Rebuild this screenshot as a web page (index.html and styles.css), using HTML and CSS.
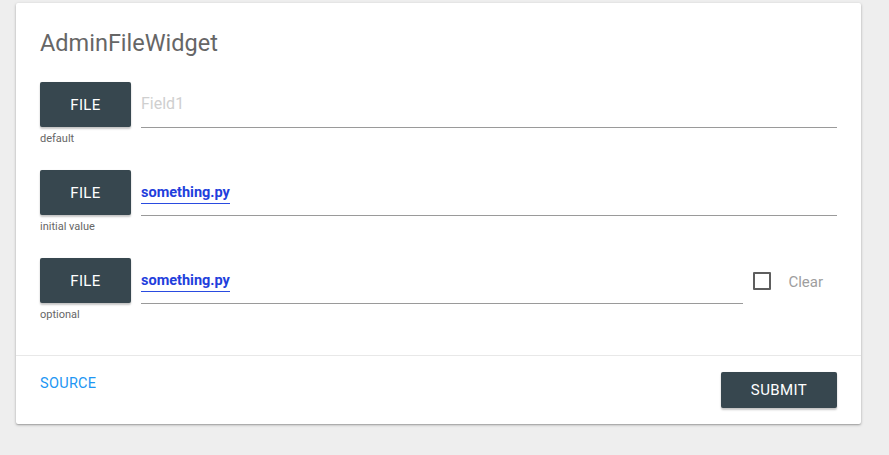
FILE: index.html
```html
<!DOCTYPE html>
<html>
<head>
<meta charset="utf-8">
<link rel="stylesheet" href="styles.css">
</head>
<body>
<div class="card">
  <div class="card-body">
    <h1 class="title">AdminFileWidget</h1>

    <div class="file-row">
      <div class="file-main">
        <button class="btn">FILE</button>
        <div class="field"><span class="placeholder">Field1</span></div>
      </div>
      <div class="helper">default</div>
    </div>

    <div class="file-row">
      <div class="file-main">
        <button class="btn">FILE</button>
        <div class="field"><a class="file-link" href="#">something.py</a></div>
      </div>
      <div class="helper">initial value</div>
    </div>

    <div class="file-row">
      <div class="file-main">
        <button class="btn">FILE</button>
        <div class="field"><a class="file-link" href="#">something.py</a></div>
        <label class="clear">
          <span class="checkbox"></span>
          <span class="clear-text">Clear</span>
        </label>
      </div>
      <div class="helper">optional</div>
    </div>
  </div>
  <div class="card-footer">
    <a class="source" href="#">SOURCE</a>
    <button class="btn btn-submit">SUBMIT</button>
  </div>
</div>
</body>
</html>
```

FILE: styles.css
```css
* { box-sizing: border-box; }
html, body { margin: 0; padding: 0; }
body {
  background: #eeeeee;
  font-family: Roboto, "Liberation Sans", Arial, sans-serif;
  width: 889px;
  height: 455px;
  overflow: hidden;
}
.card {
  margin: 3px 0 0 16px;
  width: 845px;
  height: 421px;
  background: #fff;
  border-radius: 2px;
  box-shadow: 0 1px 3px rgba(0,0,0,0.28), 0 1px 1px rgba(0,0,0,0.12);
  display: flex;
  flex-direction: column;
}
.card-body {
  padding: 24px 24px 0 24px;
  height: 352px;
}
.title {
  margin: 0 0 23px 0;
  font-size: 23.5px;
  line-height: 32px;
  font-weight: 400;
  color: #666;
}
.file-row {
  margin-bottom: 24px;
}
.file-main {
  display: flex;
  align-items: flex-start;
}
.btn {
  border: none;
  background: #37474f;
  color: #fff;
  font-family: Roboto, "Liberation Sans", Arial, sans-serif;
  font-size: 15px;
  font-weight: 400;
  letter-spacing: 0.4px;
  width: 91px;
  height: 45px;
  border-radius: 2px;
  box-shadow: 0 2px 2px rgba(0,0,0,0.22), 0 0 1px rgba(0,0,0,0.12);
  padding: 0;
  flex: none;
}
.field {
  flex: 1;
  margin-left: 10px;
  height: 46px;
  border-bottom: 1px solid #9a9a9a;
  display: flex;
  align-items: center;
  padding-bottom: 2px;
}
.placeholder {
  font-size: 16px;
  color: #cfcfcf;
}
.file-link {
  display: inline-block;
  font-size: 14.5px;
  font-weight: 700;
  color: #1f40dc;
  text-decoration: none;
  border-bottom: 1px solid #2a4be0;
  padding-bottom: 1px;
  line-height: 19px;
  margin-top: 4px;
}
.helper {
  margin-top: 4px;
  font-size: 11px;
  line-height: 14px;
  color: #666;
}
.clear {
  display: flex;
  align-items: center;
  height: 45px;
  margin-left: 10px;
  padding-right: 14px;
}
.checkbox {
  width: 18px;
  height: 18px;
  border: 2px solid #5e5e5e;
  border-radius: 1px;
  margin-top: 1px;
}
.clear-text {
  margin-left: 17px;
  font-size: 15px;
  color: #9e9e9e;
  margin-top: 2px;
}
.card-footer {
  border-top: 1px solid #e8e8e8;
  padding: 16px 24px 16px 24px;
  display: flex;
  justify-content: space-between;
  align-items: flex-start;
}
.source {
  margin-top: 1px;
  font-size: 14.5px;
  line-height: 22px;
  color: #2196f3;
  text-decoration: none;
  letter-spacing: 0.3px;
}
.btn-submit {
  width: 116px;
  height: 36px;
}
```
